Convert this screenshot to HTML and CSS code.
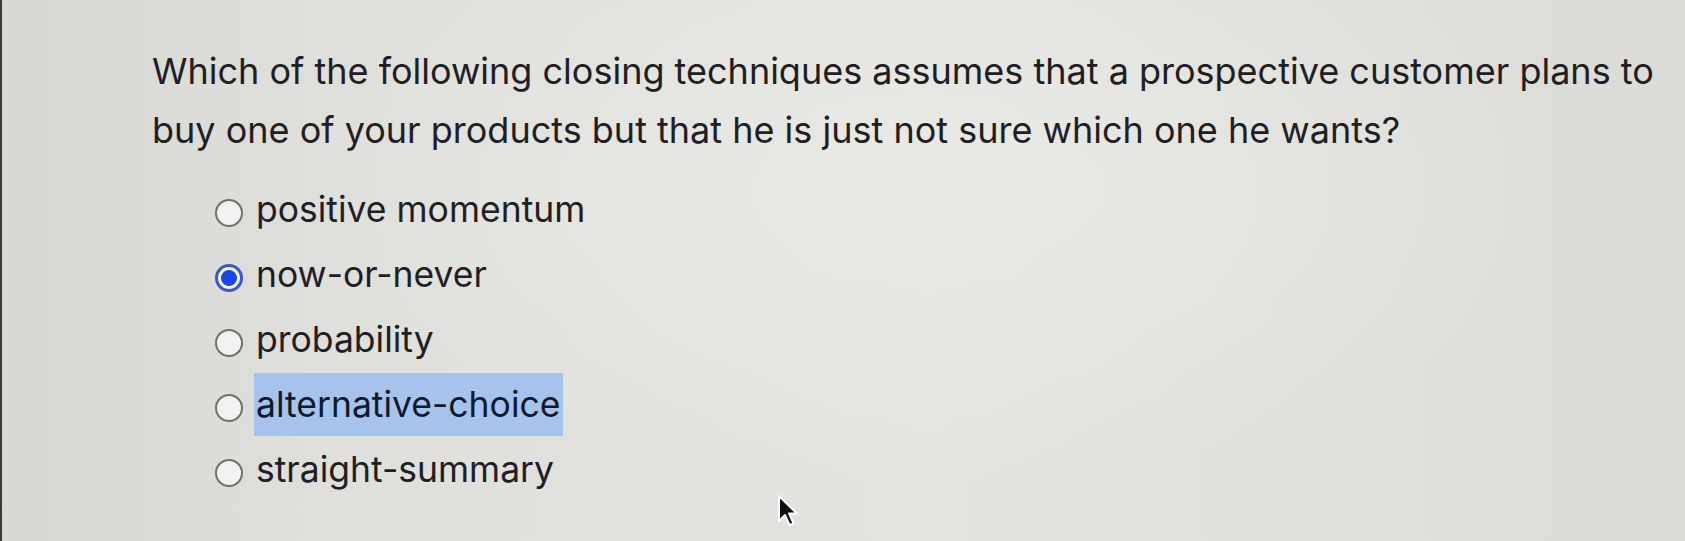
FILE: index.html
```html
<!DOCTYPE html>
<html lang="en">
<head>
<meta charset="utf-8">
<title>Question</title>
<link rel="stylesheet" href="styles.css">
</head>
<body>
<div class="screen">
  <main class="quiz">
    <p class="question">Which of the following closing techniques assumes that a prospective customer plans to buy one of your products but that he is just not sure which one he wants?</p>
    <ul class="options">
      <li class="option"><span class="radio"></span>positive momentum</li>
      <li class="option"><span class="radio checked"></span>now-or-never</li>
      <li class="option"><span class="radio"></span>probability</li>
      <li class="option"><span class="radio"></span><span class="selection">alternative-choice</span></li>
      <li class="option"><span class="radio"></span>straight-summary</li>
    </ul>
  </main>
  <svg class="cursor" width="22" height="36" viewBox="0 0 22 36" aria-hidden="true">
    <path d="M2 2 L2 27 L8 21 L12.5 31 L16.5 29.3 L12 19.5 L20 19.5 Z" fill="#111" stroke="#fff" stroke-width="2" stroke-linejoin="round"/>
  </svg>
</div>
</body>
</html>
```
FILE: styles.css
```css
html, body {
  margin: 0;
  padding: 0;
}
body {
  width: 1685px;
  height: 541px;
  overflow: hidden;
  background: #e0e0dd;
}
.screen {
  position: relative;
  width: 1683px;
  height: 541px;
  border-left: 2px solid #3a3a3a;
  background:
    radial-gradient(ellipse 900px 420px at 55% 35%, rgba(234,234,231,0.9), rgba(234,234,231,0) 70%),
    linear-gradient(90deg, #d7d7d4 0%, #dfdfdc 20%, #e3e3e0 55%, #dedfdb 85%, #dbdbd8 100%);
  font-family: Inter, "Liberation Sans", Arial, sans-serif;
  color: #1f201f;
}
.quiz {
  padding: 42px 0 0 150px;
}
.question {
  margin: 0;
  width: 1515px;
  font-size: 36px;
  line-height: 59px;
}
.options {
  list-style: none;
  margin: 17px 0 0 0;
  padding: 0 0 0 63px;
}
.option {
  font-size: 35.5px;
  line-height: 65px;
  white-space: nowrap;
}
.radio {
  display: inline-block;
  box-sizing: border-box;
  width: 28px;
  height: 28px;
  margin-right: 13px;
  border: 2px solid #707070;
  border-radius: 50%;
  background: #f2f2f0;
  vertical-align: -5px;
}
.radio.checked {
  border: 3px solid #3b55d6;
  background: radial-gradient(circle, #1846ea 0, #1846ea 7.5px, #f4f5f8 8.3px);
}
.selection {
  display: inline-block;
  line-height: 63px;
  padding: 0 3px 0 2px;
  margin-left: -2px;
  background: #a6c3eb;
  color: #0e1a2c;
}
.cursor {
  position: absolute;
  left: 775px;
  top: 494px;
}
```
